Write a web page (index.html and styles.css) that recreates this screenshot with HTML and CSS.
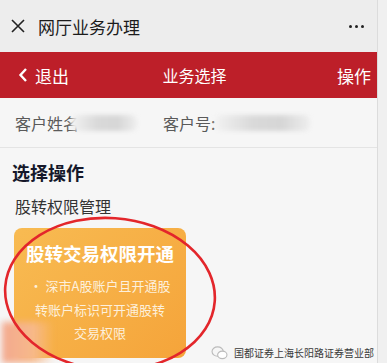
FILE: index.html
```html
<!DOCTYPE html>
<html lang="zh-CN">
<head>
    <meta charset="UTF-8">
    <meta name="viewport" content="width=device-width, initial-scale=1.0">
    <title>网厅业务办理</title>
    <link rel="stylesheet" href="styles.css">
</head>
<body>
    <div class="screen">
        <div class="topbar">
            <svg class="close-icon" width="16" height="16" viewBox="0 0 16 16">
                <path d="M2 2 L14 14 M14 2 L2 14" stroke="#222" stroke-width="1.6" fill="none"/>
            </svg>
            <span class="top-title">网厅业务办理</span>
            <span class="more"><i></i><i></i><i></i></span>
        </div>

        <div class="navbar">
            <div class="nav-back">
                <svg width="10" height="16" viewBox="0 0 10 16">
                    <path d="M8 2 L2.5 8 L8 14" stroke="#fff" stroke-width="2.4" fill="none"/>
                </svg>
                <span>退出</span>
            </div>
            <div class="nav-title">业务选择</div>
            <div class="nav-action">操作</div>
        </div>

        <div class="customer">
            <span class="label">客户姓名</span>
            <span class="blur blur-name"></span>
            <span class="label label-no">客户号:</span>
            <span class="blur blur-no"></span>
        </div>

        <div class="section">
            <h3>选择操作</h3>
            <div class="group-name">股转权限管理</div>
            <div class="card">
                <div class="card-title">股转交易权限开通</div>
                <div class="card-text">· 深市A股账户且开通股<br>转账户标识可开通股转<br>交易权限</div>
            </div>
        </div>

        <div class="smudge"></div>

        <svg class="circle" width="240" height="175" viewBox="0 0 240 175">
            <ellipse cx="112" cy="92" rx="105" ry="76" transform="rotate(4 112 92)" stroke="#e3262b" stroke-width="2.6" fill="none"/>
        </svg>

        <div class="watermark">
            <svg width="17" height="14" viewBox="0 0 18 15">
                <ellipse cx="7" cy="6" rx="6" ry="5" fill="none" stroke="#bbb" stroke-width="1.2"/>
                <ellipse cx="12" cy="9.5" rx="5" ry="4" fill="#fff" stroke="#bbb" stroke-width="1.2"/>
            </svg>
            <span>国都证券上海长阳路证券营业部</span>
        </div>
    </div>
    <div class="edge"></div>
</body>
</html>
```

FILE: styles.css
```css
* {
    margin: 0;
    padding: 0;
    box-sizing: border-box;
}

body {
    display: flex;
    height: 363px;
    overflow: hidden;
    background-color: #f6f6f6;
    font-family: "Noto Sans CJK SC", "Noto Sans", sans-serif;
}

.screen {
    position: relative;
    width: 378px;
    height: 363px;
    overflow: hidden;
    background-color: #f6f6f6;
    border-right: 1px solid #dcdcdc;
}

.edge {
    flex: 1;
    background-color: #f0f0f0;
}

.topbar {
    height: 52px;
    background-color: #ededed;
    display: flex;
    align-items: center;
    padding: 0 12px 0 10px;
}
.close-icon {
    margin-right: 12px;
}
.top-title {
    font-size: 17px;
    color: #1c1c1c;
    flex: 1;
}
.more {
    display: flex;
    gap: 3px;
    margin-right: 1px;
}
.more i {
    width: 3px;
    height: 3px;
    border-radius: 50%;
    background-color: #222;
}

.navbar {
    height: 46px;
    background-color: #bd1f29;
    color: white;
    display: flex;
    align-items: center;
    justify-content: space-between;
    padding: 0 6px 0 18px;
    font-size: 17px;
}
.nav-back {
    display: flex;
    align-items: center;
    gap: 7px;
    width: 90px;
}
.nav-title {
    font-size: 16px;
}
.nav-action {
    width: 90px;
    text-align: right;
}

.customer {
    height: 50px;
    display: flex;
    align-items: center;
    padding: 0 15px;
    border-bottom: 1px solid #e4e4e4;
    font-size: 16px;
    color: #5a5a5a;
}
.label-no {
    margin-left: 26px;
}
.blur {
    height: 16px;
    background: linear-gradient(90deg, #f2f2f2, #d9d9d9 40%, #d6d6d6 70%, #eeeeee);
    border-radius: 6px;
    filter: blur(2px);
}
.blur-name {
    width: 66px;
    margin-left: -8px;
}
.blur-no {
    width: 95px;
}

.section {
    padding: 11px 14px 0 12px;
}
.section h3 {
    font-size: 18px;
    font-weight: bold;
    color: #15182a;
    line-height: 26px;
}
.group-name {
    margin-top: 10px;
    padding-left: 3px;
    font-size: 16px;
    color: #333;
    line-height: 22px;
}

.card {
    margin-top: 11px;
    margin-left: 2px;
    width: 172px;
    height: 130px;
    border-radius: 8px;
    background: linear-gradient(135deg, #f8bb52, #f5a43a);
    color: white;
    text-align: center;
    padding: 12px 6px 0 6px;
}
.card-title {
    font-size: 18.5px;
    font-weight: bold;
    line-height: 26px;
    white-space: nowrap;
}
.card-text {
    margin-top: 8px;
    font-size: 13px;
    line-height: 23.5px;
    color: #fdf0dc;
    white-space: nowrap;
}

.smudge {
    position: absolute;
    left: 2px;
    top: 322px;
    width: 52px;
    height: 41px;
    background: linear-gradient(90deg, #f3a98f, #f7b98a 60%, rgba(247, 185, 138, 0));
    filter: blur(3px);
}

.circle {
    position: absolute;
    left: -2px;
    top: 202px;
}

.watermark {
    position: absolute;
    left: 211px;
    top: 345px;
    display: flex;
    align-items: center;
    gap: 6px;
    font-size: 10px;
    color: #3a3a3a;
    white-space: nowrap;
}
```
